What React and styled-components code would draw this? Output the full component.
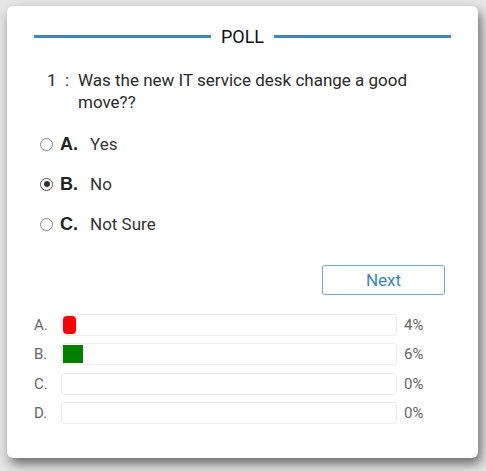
import styled, { createGlobalStyle } from "styled-components";

const Global = createGlobalStyle`
body{
    margin: 0;
    background: #e6e6e6;
    font-family: Roboto, "Liberation Sans", sans-serif;
}
`

const Page = styled.div`
width: 486px;
height: 471px;
padding: 6px 8px 13px 7px;
box-sizing: border-box;
`

const Card = styled.div`
height: 452px;
background: #fff;
border-radius: 6px;
box-shadow: 3px 6px 12px rgba(0,0,0,0.55);
padding: 20px 27px 0 27px;
box-sizing: border-box;
`

const Title = styled.div`
display: flex;
align-items: center;
gap: 10px;
font-size: 18px;
color: #111;
&::before, &::after{
    content: "";
    flex: 1;
    height: 3px;
    background: #3a87c4;
}
`

const Question = styled.div`
display: flex;
margin-top: 22px;
padding-left: 13px;
font-size: 17px;
line-height: 22px;
color: #2a2a2a;
span:first-child{
    width: 31px;
    flex: none;
}
span:last-child{
    width: 345px;
}
`

const Options = styled.div`
display: flex;
flex-direction: column;
gap: 18px;
margin-top: 20px;
padding-left: 6px;
`

const Option = styled.label`
display: flex;
align-items: center;
height: 22px;
`

const Radio = styled.span`
width: 13px;
height: 13px;
border: 1px solid ${p => p.checked ? "#555" : "#888"};
border-radius: 50%;
box-sizing: border-box;
display: flex;
align-items: center;
justify-content: center;
margin-right: 7px;
&::after{
    content: "";
    display: ${p => p.checked ? "block" : "none"};
    width: 6px;
    height: 6px;
    border-radius: 50%;
    background: #333;
}
`

const Letter = styled.span`
font-family: "Liberation Sans", Arial, sans-serif;
font-weight: bold;
font-size: 18px;
color: #222;
width: 30px;
`

const OptionText = styled.span`
font-size: 17px;
color: #333;
`

const ButtonRow = styled.div`
display: flex;
justify-content: flex-end;
margin-top: 30px;
padding-right: 6px;
`

const NextButton = styled.button`
width: 123px;
height: 30px;
background: #fff;
border: 1px solid #6aa9d9;
border-radius: 3px;
color: #3a87c4;
font-family: Roboto, "Liberation Sans", sans-serif;
font-size: 17px;
`

const Results = styled.div`
display: flex;
flex-direction: column;
gap: 7.4px;
margin-top: 19px;
`

const ResultRow = styled.div`
display: flex;
align-items: center;
color: #666;
font-size: 15px;
`

const RowLabel = styled.span`
width: 27px;
`

const Bar = styled.div`
width: 336px;
height: 22px;
border: 1px solid #ececec;
border-radius: 3px;
box-sizing: border-box;
padding: 1px;
`

const Fill = styled.div`
height: 100%;
background: ${p => p.color};
border-radius: ${p => p.round ? "4px" : "0"};
`

const Pct = styled.span`
margin-left: 7px;
`

const results = [
    { label: "A.", pct: "4%", width: 13, color: "red", round: true },
    { label: "B.", pct: "6%", width: 20, color: "green" },
    { label: "C.", pct: "0%", width: 0 },
    { label: "D.", pct: "0%", width: 0 },
]

export default function App(){
    return(
        <Page>
            <Global />
            <Card>
                <Title>POLL</Title>
                <Question>
                    <span>1&nbsp;&nbsp;:</span>
                    <span>Was the new IT service desk change a good move??</span>
                </Question>
                <Options>
                    <Option><Radio /><Letter>A.</Letter><OptionText>Yes</OptionText></Option>
                    <Option><Radio checked /><Letter>B.</Letter><OptionText>No</OptionText></Option>
                    <Option><Radio /><Letter>C.</Letter><OptionText>Not Sure</OptionText></Option>
                </Options>
                <ButtonRow>
                    <NextButton>Next</NextButton>
                </ButtonRow>
                <Results>
                    {results.map(r => (
                        <ResultRow key={r.label}>
                            <RowLabel>{r.label}</RowLabel>
                            <Bar>
                                {r.width > 0 && <Fill color={r.color} round={r.round} style={{ width: r.width }} />}
                            </Bar>
                            <Pct>{r.pct}</Pct>
                        </ResultRow>
                    ))}
                </Results>
            </Card>
        </Page>
    );
}
